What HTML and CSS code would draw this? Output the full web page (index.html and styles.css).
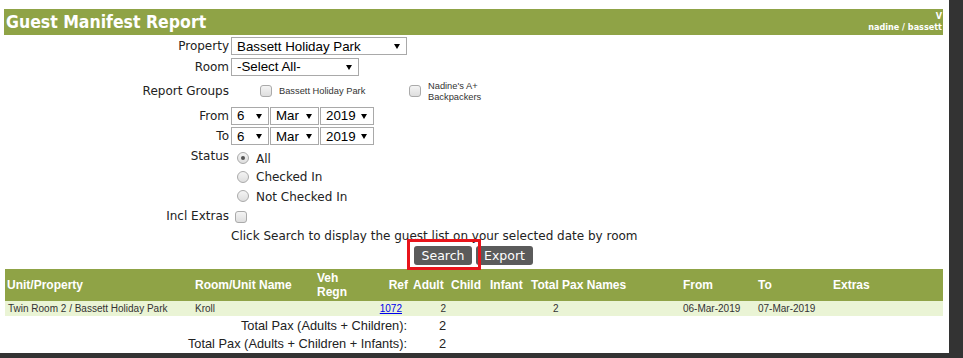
FILE: index.html
```html
<!DOCTYPE html>
<html lang="en">
<head>
  <meta charset="UTF-8">
  <title>Guest Manifest Report</title>
  <link rel="stylesheet" href="styles.css">
</head>
<body>
  <div class="page">
    <div class="titlebar">
      <h1>Guest Manifest Report</h1>
      <div class="user"><span>V</span><span>nadine / bassett</span></div>
    </div>

    <form class="filters">
      <div class="lbl">Property</div>
      <div class="fld"><span class="pick w-prop"><select><option>Bassett Holiday Park</option></select></span></div>

      <div class="lbl">Room</div>
      <div class="fld"><span class="pick w-room"><select><option>-Select All-</option></select></span></div>

      <div class="lbl">Report Groups</div>
      <div class="fld groups">
        <label class="grp"><input type="checkbox" class="box"><span>Bassett Holiday Park</span></label>
        <label class="grp"><input type="checkbox" class="box"><span class="narrow">Nadine's A+ Backpackers</span></label>
      </div>

      <div class="lbl">From</div>
      <div class="fld dates">
        <span class="pick w-day"><select><option>6</option></select></span>
        <span class="pick w-mon"><select><option>Mar</option></select></span>
        <span class="pick w-year"><select><option>2019</option></select></span>
      </div>

      <div class="lbl">To</div>
      <div class="fld dates">
        <span class="pick w-day"><select><option>6</option></select></span>
        <span class="pick w-mon"><select><option>Mar</option></select></span>
        <span class="pick w-year"><select><option>2019</option></select></span>
      </div>

      <div class="lbl top">Status</div>
      <div class="fld status">
        <label class="opt"><input type="radio" name="st" class="dot" checked><span>All</span></label>
        <label class="opt"><input type="radio" name="st" class="dot"><span>Checked In</span></label>
        <label class="opt"><input type="radio" name="st" class="dot"><span>Not Checked In</span></label>
      </div>

      <div class="lbl">Incl Extras</div>
      <div class="fld"><input type="checkbox" class="box extras"></div>

      <div class="lbl"></div>
      <div class="fld hint">Click Search to display the guest list on your selected date by room</div>

      <div class="actions">
        <button type="button" class="btn search">Search</button>
        <button type="button" class="btn export">Export</button>
        <span class="mark"></span>
      </div>
    </form>

    <table class="manifest">
      <colgroup>
        <col style="width:188px"><col style="width:122px"><col style="width:45px"><col style="width:51px">
        <col style="width:38px"><col style="width:39px"><col style="width:41px"><col style="width:152px">
        <col style="width:75px"><col style="width:75px"><col style="width:112px">
      </colgroup>
      <thead>
        <tr>
          <th>Unit/Property</th>
          <th>Room/Unit Name</th>
          <th>Veh Regn</th>
          <th class="num">Ref</th>
          <th>Adult</th>
          <th>Child</th>
          <th>Infant</th>
          <th>Total Pax Names</th>
          <th>From</th>
          <th>To</th>
          <th>Extras</th>
        </tr>
      </thead>
      <tbody>
        <tr class="stay">
          <td>Twin Room 2 / Bassett Holiday Park</td>
          <td>Kroll</td>
          <td></td>
          <td class="num ref"><a href="#">1072</a></td>
          <td class="num">2</td>
          <td></td>
          <td></td>
          <td class="pax">2</td>
          <td>06-Mar-2019</td>
          <td>07-Mar-2019</td>
          <td></td>
        </tr>
        <tr class="total">
          <td colspan="4">Total Pax (Adults + Children):</td>
          <td class="num">2</td>
          <td colspan="6"></td>
        </tr>
        <tr class="total">
          <td colspan="4">Total Pax (Adults + Children + Infants):</td>
          <td class="num">2</td>
          <td colspan="6"></td>
        </tr>
      </tbody>
    </table>
  </div>
</body>
</html>
```

FILE: styles.css
```css
body {
  margin: 0;
  background: #333333;
}

.page {
  position: relative;
  box-sizing: border-box;
  width: 949px;
  height: 353px;
  padding: 9px 6px 0 4px;
  background: #fff;
  font-family: "DejaVu Sans", Verdana, sans-serif;
  font-size: 12px;
  color: #222;
}

/* --------------- Title ----------------- */

.titlebar {
  display: flex;
  justify-content: space-between;
  align-items: center;
  height: 26px;
  background: #8fa346;
  color: #fff;
}

.titlebar h1 {
  margin: 0;
  padding-left: 2px;
  font-family: "DejaVu Sans Condensed", "DejaVu Sans", sans-serif;
  font-size: 17.5px;
  font-weight: bold;
}

.user {
  display: flex;
  flex-direction: column;
  align-items: flex-end;
  padding-right: 1px;
  font-family: "DejaVu Sans Condensed", "DejaVu Sans", sans-serif;
  font-size: 9px;
  font-weight: bold;
  line-height: 11px;
}

/* --------------- Filters ----------------- */

.filters {
  display: grid;
  grid-template-columns: 225px 1fr;
  grid-template-rows: 20px 21px 28px 21px 20px 60px 20px 20px 20px;
  column-gap: 2px;
  margin-top: 1px;
}

.lbl {
  display: flex;
  align-items: center;
  justify-content: flex-end;
  white-space: nowrap;
}

.lbl.top {
  align-items: flex-start;
  line-height: 20px;
}

.fld {
  display: flex;
  align-items: center;
}

.pick {
  position: relative;
  display: inline-block;
  height: 18px;
}

.pick select {
  -webkit-appearance: none;
  appearance: none;
  box-sizing: border-box;
  width: 100%;
  height: 18px;
  margin: 0;
  padding: 0 0 0 5px;
  border: 1px solid #a9a9a9;
  border-radius: 0;
  background: #fff;
  font-family: "Liberation Sans", Arial, sans-serif;
  font-size: 13.33px;
  color: #000;
}

/* flecha del desplegable */
.pick:after {
  content: "";
  position: absolute;
  right: 7px;
  top: 7px;
  border-left: 3.5px solid transparent;
  border-right: 3.5px solid transparent;
  border-top: 5px solid #000;
  pointer-events: none;
}

.w-prop { width: 176px; }
.w-room { width: 128px; }
.w-day { width: 38px; }
.w-mon { width: 49px; }
.w-year { width: 54px; }

.dates {
  gap: 1px;
}

.groups {
  padding-left: 29px;
}

.grp {
  display: flex;
  align-items: center;
  gap: 7px;
  width: 149px;
  font-family: "Liberation Sans", Arial, sans-serif;
  font-size: 9.3px;
  color: #333;
}

.grp .narrow {
  width: 64px;
  line-height: 11px;
  padding-top: 2px;
}

.box, .dot {
  -webkit-appearance: none;
  appearance: none;
  box-sizing: border-box;
  width: 12px;
  height: 12px;
  margin: 0;
  flex: none;
  border: 1px solid #aaa;
  background: linear-gradient(#f4f4f4, #dedede);
}

.box {
  border-radius: 3px;
}

.dot {
  position: relative;
  border-radius: 50%;
}

.dot:checked:after {
  content: "";
  position: absolute;
  left: 3px;
  top: 3px;
  width: 4px;
  height: 4px;
  border-radius: 50%;
  background: #555;
}

.status {
  flex-direction: column;
  align-items: flex-start;
  padding-top: 2px;
}

.opt {
  display: flex;
  align-items: center;
  gap: 7px;
  height: 20px;
  padding-left: 6px;
}

.opt span {
  padding-top: 3px;
}

.opt:nth-child(n+2) span {
  padding-top: 1px;
}

.extras {
  margin-left: 4px;
  margin-top: 1px;
}

.hint {
  white-space: nowrap;
}

.actions {
  position: relative;
  grid-column: 1 / 3;
  display: flex;
  justify-content: center;
  align-items: flex-start;
  gap: 4px;
}

.btn {
  height: 19px;
  padding: 0;
  border: none;
  border-radius: 3px;
  background: #5b5b5b;
  color: #fff;
  font-family: "DejaVu Sans", Verdana, sans-serif;
  font-size: 12.5px;
  line-height: 19px;
}

.btn.search { width: 58px; }
.btn.export { width: 57px; }

/* recuadro rojo de la captura */
.mark {
  position: absolute;
  left: 403px;
  top: -7px;
  width: 68px;
  height: 25px;
  border: 3px solid #e8141b;
  pointer-events: none;
}

/* --------------- Tabla ----------------- */

.manifest {
  width: 938px;
  margin: 3px 0 0 1px;
  border-collapse: collapse;
  table-layout: fixed;
  font-family: "Liberation Sans", Arial, sans-serif;
}

.manifest th {
  height: 32px;
  padding: 0 2px;
  background: #8fa346;
  color: #fff;
  font-size: 12px;
  font-weight: bold;
  text-align: left;
  line-height: 14px;
}

.manifest .num {
  text-align: right;
  padding-right: 3px;
}

.manifest th.num {
  padding-right: 3px;
}

.stay td {
  height: 15px;
  padding: 0 2px 0 3px;
  background: #eaf4d5;
  font-size: 10px;
  color: #333;
  white-space: nowrap;
}

.stay td:nth-child(2),
.stay td:nth-child(9),
.stay td:nth-child(10) {
  padding-left: 2px;
}

.stay .ref {
  padding-right: 9px;
}

.stay .ref a {
  color: #0000ee;
}

.stay .pax {
  padding-left: 24px;
}

.total td {
  height: 18px;
  padding: 0 4px 0 0;
  font-size: 12.8px;
  color: #222;
  text-align: right;
}

.total td.num {
  padding-right: 3px;
}
```
